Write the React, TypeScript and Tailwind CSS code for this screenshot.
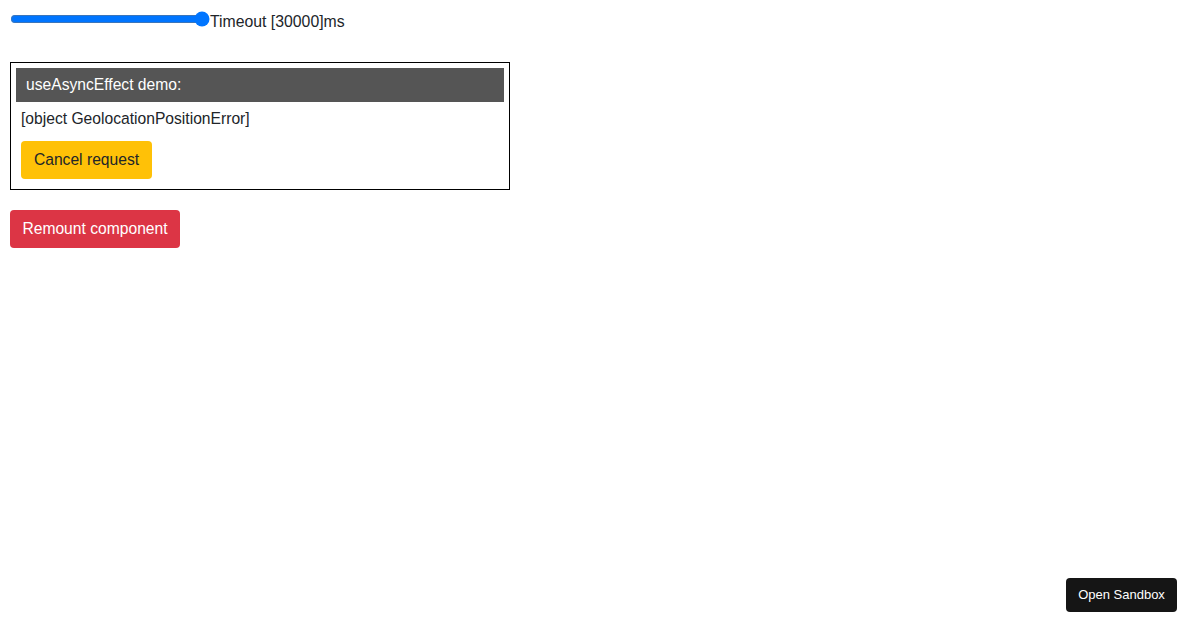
import { useState } from 'react'

export default function App() {
  const [timeout, setTimeoutValue] = useState(30000)

  return (
    <div
      className="min-h-[630px] bg-white px-[10px] pt-[7px] text-[15.65px] leading-6 text-[#212529]"
      style={{ fontFamily: '"Liberation Sans", Arial, sans-serif' }}
    >
      <div className="flex h-6 items-center">
        <input
          type="range"
          min={0}
          max={30000}
          value={timeout}
          onChange={(e) => setTimeoutValue(Number(e.target.value))}
          className="m-0 h-4 w-[200px] accent-[#0075ff]"
        />
        <span className="translate-y-[3px] text-[15.8px]">Timeout [{timeout}]ms</span>
      </div>

      <div className="mt-[31px] w-[500px] border border-black p-[5px]">
        <div className="h-[34px] bg-[#555555] px-[10px] leading-[34px] text-white">useAsyncEffect demo:</div>
        <div className="px-[5px] pb-[5px] pt-[4px]">
          <div className="translate-y-[1px]">[object GeolocationPositionError]</div>
          <button className="mt-[11px] h-[38px] w-[131px] rounded-[4px] bg-[#ffc107] text-[#212529]">
            Cancel request
          </button>
        </div>
      </div>

      <button className="mt-5 h-[38px] w-[170px] rounded-[4px] bg-[#dc3545] text-white">Remount component</button>

      <div className="fixed bottom-[18px] right-[23px] flex h-[34px] w-[111px] items-center justify-center rounded-[4px] bg-[#151515] text-[13px] text-white">
        Open Sandbox
      </div>
    </div>
  )
}
